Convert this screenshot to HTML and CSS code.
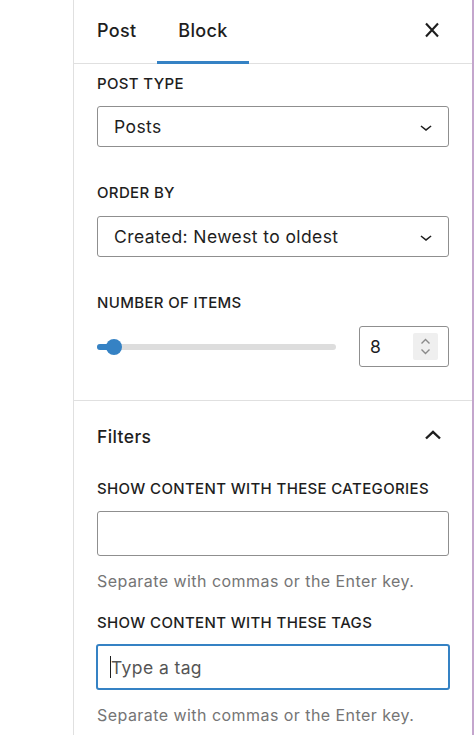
FILE: index.html
```html
<!DOCTYPE html>
<html lang="en">
<head>
<meta charset="utf-8">
<title>Block settings</title>
<link rel="stylesheet" href="styles.css">
</head>
<body>
<div class="page">
  <div class="gutter"></div>
  <aside class="sidebar">
    <header class="tabs">
      <div class="tab">Post</div>
      <div class="tab active">Block</div>
      <div class="spacer"></div>
      <button class="close" aria-label="Close">
        <svg width="16" height="16" viewBox="0 0 16 16"><path d="M2 1.5 L14 14.5 M14 1.5 L2 14.5" stroke="#1e1e1e" stroke-width="2.1" fill="none"/></svg>
      </button>
    </header>

    <section class="panel first">
      <div class="label">Post type</div>
      <div class="select">
        <span>Posts</span>
        <svg class="chev" width="24" height="24" viewBox="0 0 24 24"><path d="M17.5 11.6L12 16l-5.5-4.4.9-1.2L12 14l4.6-3.6 1 1.2z" fill="#1e1e1e"/></svg>
      </div>

      <div class="label gap">Order by</div>
      <div class="select">
        <span>Created: Newest to oldest</span>
        <svg class="chev" width="24" height="24" viewBox="0 0 24 24"><path d="M17.5 11.6L12 16l-5.5-4.4.9-1.2L12 14l4.6-3.6 1 1.2z" fill="#1e1e1e"/></svg>
      </div>

      <div class="label gap">Number of items</div>
      <div class="range-row">
        <div class="track">
          <div class="fill" style="width:17px"></div>
          <div class="thumb"></div>
        </div>
        <div class="number">
          <span>8</span>
          <div class="spin">
            <svg width="25" height="27" viewBox="0 0 25 27"><path d="M8.5 10.5 L12.5 6.5 L16.5 10.5 M8.5 16.5 L12.5 20.5 L16.5 16.5" stroke="#8a8a8a" stroke-width="1.4" fill="none"/></svg>
          </div>
        </div>
      </div>
    </section>

    <section class="panel filters">
      <div class="panel-title">
        <span>Filters</span>
        <svg width="18" height="12" viewBox="0 0 18 12"><path d="M2 9.5 L9 2.8 L16 9.5" stroke="#1e1e1e" stroke-width="2.4" fill="none"/></svg>
      </div>

      <div class="label">Show content with these categories</div>
      <div class="text-input"></div>
      <p class="help">Separate with commas or the Enter key.</p>

      <div class="label gap2">Show content with these tags</div>
      <div class="text-input focused"><span class="caret"></span><span class="placeholder">Type a tag</span></div>
      <p class="help">Separate with commas or the Enter key.</p>
    </section>
  </aside>
</div>
</body>
</html>
```

FILE: styles.css
```css
* { box-sizing: border-box; }

html, body {
  margin: 0;
  padding: 0;
  background: #ffffff;
}

body {
  font-family: Inter, "Noto Sans", "Liberation Sans", sans-serif;
  color: #1e1e1e;
}

.page {
  display: flex;
  width: 474px;
  height: 735px;
  overflow: hidden;
}

.gutter {
  width: 73px;
  flex: none;
}

.sidebar {
  width: 401px;
  flex: none;
  border-left: 1px solid #e0e0e0;
  border-right: 2px solid #c4a6cd;
  display: flex;
  flex-direction: column;
}

.tabs {
  display: flex;
  align-items: stretch;
  height: 64px;
  border-bottom: 1px solid #e0e0e0;
  padding-left: 2px;
  padding-right: 28px;
}

.tab {
  display: flex;
  align-items: center;
  padding: 0 21px;
  font-size: 18px;
  font-weight: 500;
  letter-spacing: 0.3px;
  height: 63px;
  padding-bottom: 2px;
}

.tab.active {
  box-shadow: inset 0 -3px 0 #3582c4;
  margin-bottom: -1px;
  height: 64px;
  padding-bottom: 3px;
}

.spacer { flex: 1; }

.close {
  border: 0;
  background: none;
  padding: 0;
  display: flex;
  align-items: center;
  justify-content: center;
  width: 24px;
  height: 63px;
  padding-bottom: 4px;
}

.panel {
  padding: 0 23px;
}

.panel.first {
  padding-top: 10px;
  padding-bottom: 33px;
  border-bottom: 1px solid #e0e0e0;
}

.label {
  font-size: 15px;
  font-weight: 500;
  line-height: 20px;
  text-transform: uppercase;
  margin-bottom: 12px;
  letter-spacing: 0.35px;
}

.label.gap { margin-top: 36px; margin-bottom: 13px; }
.label.gap2 { margin-top: 22px; margin-bottom: 11px; }

.select {
  height: 41px;
  border: 1px solid #8f8f8f;
  border-radius: 3px;
  display: flex;
  align-items: center;
  justify-content: space-between;
  padding: 0 10px 0 16px;
  font-size: 17.5px;
  letter-spacing: 0.4px;
}

.chev { display: block; }

.range-row {
  display: flex;
  align-items: center;
  gap: 23px;
}

.track {
  flex: 1;
  height: 6px;
  background: #dddddd;
  border-radius: 3px;
  position: relative;
}

.fill {
  height: 6px;
  background: #3582c4;
  border-radius: 3px 0 0 3px;
}

.thumb {
  position: absolute;
  left: 9px;
  top: -5px;
  width: 16px;
  height: 16px;
  border-radius: 50%;
  background: #3582c4;
}

.number {
  width: 90px;
  height: 41px;
  border: 1px solid #8f8f8f;
  border-radius: 3px;
  display: flex;
  align-items: center;
  justify-content: space-between;
  padding: 0 10px 0 10px;
  font-size: 17.5px;
}

.spin {
  width: 25px;
  height: 27px;
  background: #efefef;
  border-radius: 2px;
}

.spin svg { display: block; }

.panel-title {
  height: 70px;
  display: flex;
  align-items: center;
  justify-content: space-between;
  font-size: 17.5px;
  font-weight: 500;
  letter-spacing: 0.4px;
  padding-right: 7px;
  margin-bottom: 8px;
}

.panel-title svg { display: block; margin-bottom: 2px; }

.text-input {
  height: 45px;
  border: 1px solid #8f8f8f;
  border-radius: 3px;
}

.text-input.focused {
  height: 46px;
  margin: 0 -1px;
  border: 2px solid #3582c4;
  display: flex;
  align-items: center;
  padding-left: 12px;
  font-size: 17.5px;
  letter-spacing: 0.4px;
}

.caret {
  width: 1px;
  height: 22px;
  background: #1e1e1e;
}

.placeholder {
  color: #555555;
}

.help {
  margin: 15px 0 0;
  font-size: 16px;
  line-height: 20px;
  color: #757575;
  letter-spacing: 0.45px;
}
```
